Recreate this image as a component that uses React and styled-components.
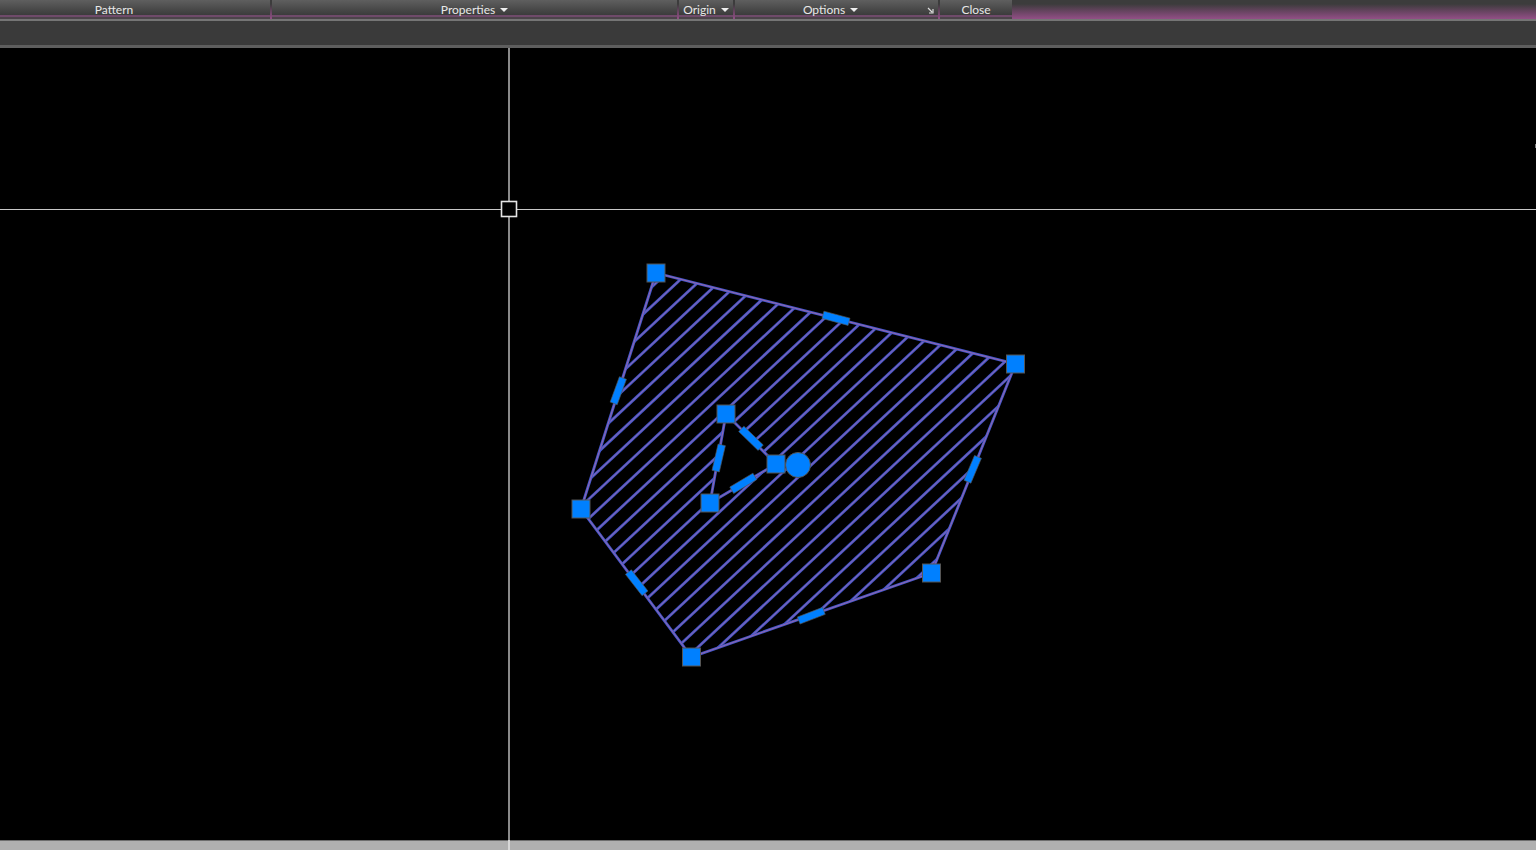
import React from 'react'
import styled, { createGlobalStyle } from 'styled-components'

const GlobalStyle = createGlobalStyle`
    html, body {
        margin: 0;
        padding: 0;
        background: #000;
        overflow: hidden;
    }
`
const Page = styled.div`
    width: 100vw;
    height: 100vh;
    display: flex;
    flex-direction: column;
    font-family: Lato, "Liberation Sans", sans-serif;
`
const Ribbon = styled.div`
    height: 19px;
    display: flex;
    flex-shrink: 0;
    gap: 2px;
    background: linear-gradient(#3c3c3c 0, #3c3c3c 4px, #6b4564 12px, #924f86 19px);
`
const Group = styled.div`
    position: relative;
    flex: 0 0 ${props => props.$width}px;
    height: 15px;
    display: flex;
    align-items: center;
    justify-content: center;
    gap: 5px;
    color: #e8e8e8;
    font-size: 12px;
    line-height: 15px;
    padding: 3px ${props => props.$inset || 0}px 0 0;
    box-sizing: border-box;
    background: linear-gradient(#5f5f5f, #3b3b3b);
    box-shadow: 0 2px 0 #6f4a6a, 0 4px 0 #4c444a;
`
const Caret = styled.span`
    width: 0;
    height: 0;
    margin-top: 1px;
    border-left: 4px solid transparent;
    border-right: 4px solid transparent;
    border-top: 4px solid #eee;
`
const Launcher = styled.svg`
    position: absolute;
    right: 4px;
    top: 7px;
    width: 7px;
    height: 7px;
`
const Separator = styled.div`
    height: 2px;
    flex-shrink: 0;
    background: #757575;
`
const Strip = styled.div`
    height: 24px;
    flex-shrink: 0;
    background: #3a3a3a;
    border-bottom: 3px solid #5e5e5e;
`
const CanvasArea = styled.div`
    flex: 1;
    min-height: 0;
    background: #000;
`
const Drawing = styled.svg`
    display: block;
    width: 100%;
    height: 100%;
`
const StatusBar = styled.div`
    position: relative;
    height: 9px;
    flex-shrink: 0;
    background: #b0b0b0;
    border-top: 1px solid #6e6e6e;
`
const StatusCross = styled.div`
    position: absolute;
    left: 508px;
    top: -1px;
    bottom: 0;
    width: 2px;
    background: #d8d8d8;
`

const groups = [
    { label: 'Pattern', width: 270, inset: 42 },
    { label: 'Properties', width: 405, menu: true },
    { label: 'Origin', width: 54, menu: true },
    { label: 'Options', width: 203, inset: 12, menu: true, launcher: true },
    { label: 'Close', width: 72 },
]

// all drawing coordinates below are page pixels, the canvas starts at y = 48
const TOP = 48
const outer = [[656, 273], [1015.5, 364], [931.5, 573], [691.5, 657], [581, 509]]
const inner = [[726, 414], [776, 464], [710, 503]]
const edgeHandles = [
    [836, 318.3, 15], [972.7, 469.3, -67], [811.3, 615.7, -21], [636.7, 582.7, 52],
    [618.3, 390.7, -70], [751, 438.3, 44], [743.3, 483.3, -31], [718.7, 458, -77],
]
const vertices = [...outer, ...inner]

const toPath = pts => 'M' + pts.map(p => p.join(' ')).join('L') + 'Z'

// hatch lines: 0.93 * x + y = k, one every 19.2 of k
const SLOPE = 0.93
const hatch = []
for (let k = 912.3 - 19.2; k < 1640; k += 19.2) {
    hatch.push(k)
}

const HatchLines = ({ color, width }) => (
    <g stroke={color} strokeWidth={width}>
        {hatch.map(k => (
            <line key={k} x1={500} y1={k - SLOPE * 500} x2={1100} y2={k - SLOPE * 1100} />
        ))}
    </g>
)

const Outline = ({ color, width }) => (
    <path d={toPath(outer) + toPath(inner)} fill="none" stroke={color} strokeWidth={width} />
)

const App = () => (
    <Page>
        <GlobalStyle />
        <Ribbon>
            {groups.map(g => (
                <Group key={g.label} $width={g.width} $inset={g.inset}>
                    {g.label}
                    {g.menu && <Caret />}
                    {g.launcher && (
                        <Launcher viewBox="0 0 7 7">
                            <path d="M1 1L5 5M6 2V6H2" fill="none" stroke="#ddd" strokeWidth="1.2" />
                        </Launcher>
                    )}
                </Group>
            ))}
        </Ribbon>
        <Separator />
        <Strip />
        <CanvasArea>
            <Drawing viewBox={`0 ${TOP} 1536 792`} preserveAspectRatio="xMinYMin slice">
                <defs>
                    <clipPath id="hatch-area">
                        <path d={toPath(outer) + toPath(inner)} clipRule="evenodd" />
                    </clipPath>
                </defs>

                <line x1="509" y1="48" x2="509" y2="840" stroke="#b8b8b8" strokeWidth="1.5" />
                <line x1="0" y1="209.5" x2="1536" y2="209.5" stroke="#c8c8c8" strokeWidth="1.2" />
                <rect x="501.5" y="201.5" width="15" height="15" fill="#000" stroke="#e4e4e4" strokeWidth="1.6" />
                <rect x="1535" y="144" width="1" height="4" fill="#777" />

                <g clipPath="url(#hatch-area)">
                    <HatchLines color="#4358cc" width="2.8" />
                    <HatchLines color="#b86c9c" width="0.7" />
                </g>
                <Outline color="#4358cc" width="2.8" />
                <Outline color="#b86c9c" width="0.7" />

                {edgeHandles.map(([x, y, angle]) => (
                    <rect
                        key={`${x}-${y}`}
                        x={x - 13.5}
                        y={y - 3.75}
                        width="27"
                        height="7.5"
                        fill="#0080ff"
                        stroke="#555"
                        strokeWidth="0.6"
                        transform={`rotate(${angle} ${x} ${y})`}
                    />
                ))}
                {vertices.map(([x, y]) => (
                    <rect
                        key={`${x}-${y}`}
                        x={x - 9}
                        y={y - 9}
                        width="18"
                        height="18"
                        fill="#0080ff"
                        stroke="#555"
                        strokeWidth="1"
                    />
                ))}
                <circle cx="798" cy="465" r="12.5" fill="#0080ff" stroke="#555" strokeWidth="1" />
            </Drawing>
        </CanvasArea>
        <StatusBar>
            <StatusCross />
        </StatusBar>
    </Page>
)

export default App
